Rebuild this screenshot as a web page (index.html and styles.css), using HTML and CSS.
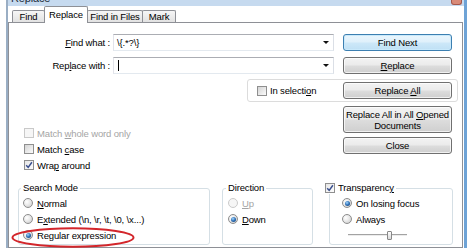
FILE: index.html
```html
<!DOCTYPE html>
<html>
<head>
<meta charset="utf-8">
<title>Replace</title>
<link rel="stylesheet" href="styles.css">
</head>
<body>
<div class="window">
  <div class="titlebar"><span class="title">Replace</span><span class="close"></span></div>
  <div class="tabs">
    <div class="tab t-find">Find</div>
    <div class="tab t-replace active">Replace</div>
    <div class="tab t-files">Find in Files</div>
    <div class="tab t-mark">Mark</div>
  </div>
  <div class="panel">
    <div class="row row-find">
      <div class="lbl"><u>F</u>ind what :</div>
      <div class="combo"><span class="val">\{.*?\}</span><span class="arrow"></span></div>
      <div class="btn default"><span>Find Next</span></div>
    </div>
    <div class="row row-repl">
      <div class="lbl">Rep<u>l</u>ace with :</div>
      <div class="combo"><span class="caret"></span><span class="arrow"></span></div>
      <div class="btn"><span><u>R</u>eplace</span></div>
    </div>
    <div class="sel-box">
      <span class="cb"></span><span>In selecti<u>o</u>n</span>
      <div class="btn"><span>Replace <u>A</u>ll</span></div>
    </div>
    <div class="mid">
      <div class="checks">
        <div class="check-row"><span class="cb disabled"></span><span class="dim">Match <u>w</u>hole word only</span></div>
        <div class="check-row"><span class="cb"></span><span>Match <u>c</u>ase</span></div>
        <div class="check-row"><span class="cb checked"><svg viewBox="0 0 8 8" width="8" height="8"><path d="M1.2 4.2 L3.2 6.4 L6.9 1.3" fill="none" stroke="#3a4f8e" stroke-width="1.5"/></svg></span><span>Wra<u>p</u> around</span></div>
      </div>
      <div class="btns">
        <div class="btn tall"><span>Replace All in All <u>O</u>pened<br>Documents</span></div>
        <div class="btn"><span>Close</span></div>
      </div>
    </div>
    <div class="groups">
      <fieldset class="grp grp-search">
        <legend>Search Mode</legend>
        <div class="rows">
          <div class="check-row"><span class="rd"></span><span><u>N</u>ormal</span></div>
          <div class="check-row"><span class="rd"></span><span>E<u>x</u>tended (\n, \r, \t, \0, \x...)</span></div>
          <div class="check-row"><span class="rd on"></span><span>Regular expression</span></div>
        </div>
      </fieldset>
      <fieldset class="grp grp-dir">
        <legend>Direction</legend>
        <div class="rows">
          <div class="check-row"><span class="rd disabled"></span><span class="dim"><u>U</u>p</span></div>
          <div class="check-row"><span class="rd on"></span><span><u>D</u>own</span></div>
        </div>
      </fieldset>
      <fieldset class="grp grp-trans">
        <legend><span class="cb checked"><svg viewBox="0 0 8 8" width="8" height="8"><path d="M1.2 4.2 L3.2 6.4 L6.9 1.3" fill="none" stroke="#3a4f8e" stroke-width="1.5"/></svg></span><span>Transparenc<u>y</u></span></legend>
        <div class="rows">
          <div class="check-row"><span class="rd on"></span><span>On losing focus</span></div>
          <div class="check-row"><span class="rd"></span><span>Always</span></div>
          <div class="slider"><span class="track tl"></span><span class="thumb"></span><span class="track tr"></span></div>
        </div>
      </fieldset>
    </div>
  </div>
</div>
<svg class="mark" width="126" height="22" viewBox="0 0 126 22"><ellipse cx="62" cy="10.5" rx="60.5" ry="9.3" fill="none" stroke="#d3262b" stroke-width="2"/></svg>
</body>
</html>
```
FILE: styles.css
```css
* { box-sizing: border-box; }
html, body { margin: 0; padding: 0; }
body {
  width: 474px;
  height: 248px;
  overflow: hidden;
  background: #fff;
  font-family: "Liberation Sans", Arial, sans-serif;
  font-size: 9.5px;
  letter-spacing: -0.15px;
  color: #000;
  position: relative;
}
u { text-decoration: underline; text-underline-offset: 1px; }

.window {
  margin-left: 6px;
  width: 461px;
  height: 248px;
  border-left: 2px solid #9aaec4;
  border-right: 3px solid #6ea3d6;
  background: #fff;
  display: flex;
  flex-direction: column;
}
.titlebar {
  height: 6px;
  flex: none;
  background: #c6daef;
  display: flex;
  overflow: hidden;
}
.title {
  font-size: 11px;
  line-height: 11px;
  margin-top: -7px;
  margin-left: 3px;
  color: #1c2a3a;
}
.close {
  width: 11px;
  height: 5px;
  margin-left: auto;
  margin-right: 2px;
  background: #d98a78;
  border: 1px solid #a4574b;
  border-top: none;
  border-radius: 0 0 3px 3px;
}

.tabs {
  height: 16px;
  flex: none;
  display: flex;
  align-items: flex-end;
  padding-left: 4px;
}
.tab {
  height: 12px;
  border: 1px solid #8e9096;
  border-bottom: none;
  background: linear-gradient(#f6f6f6, #e2e2e2);
  display: flex;
  align-items: center;
  justify-content: center;
  margin-left: -1px;
  border-radius: 2px 2px 0 0;
}
.t-find { width: 33px; margin-left: 0; }
.t-replace { width: 44px; }
.t-files { width: 56px; }
.t-mark { width: 34px; }
.tab.active {
  height: 17px;
  margin-bottom: -1px;
  background: #fff;
  position: relative;
  z-index: 1;
  padding-bottom: 2px;
}

.panel {
  width: 455px;
  flex: 1;
  border: 1px solid #8e9096;
  background: #fff;
}

.row { display: flex; align-items: center; height: 17px; }
.row-find { margin-top: 11px; }
.row-repl { margin-top: 6px; }
.lbl { width: 101px; text-align: right; margin-right: 3px; }
.combo {
  width: 221px;
  height: 17px;
  border: 1px solid;
  border-color: #abadb3 #dbdfe6 #e3e9ef #e2e3ea;
  display: flex;
  align-items: center;
  padding-left: 3px;
  margin-right: 9px;
  background: #fff;
}
.caret { width: 1px; height: 11px; background: #000; margin-left: 1px; }
.arrow {
  margin-left: auto;
  margin-right: 4px;
  width: 0;
  height: 0;
  border-left: 3px solid transparent;
  border-right: 3px solid transparent;
  border-top: 3px solid #111;
}

.btn {
  width: 109px;
  height: 17px;
  border: 1px solid #707070;
  border-radius: 3px;
  background: linear-gradient(#f3f3f3 0%, #ebebeb 48%, #dddddd 52%, #cfcfcf 100%);
  box-shadow: inset 0 0 0 1px rgba(255,255,255,0.7);
  display: flex;
  align-items: center;
  justify-content: center;
  text-align: center;
  flex: none;
}
.btn > span { display: block; text-align: center; }
.btn.default {
  border-color: #3c7fb1;
  background: linear-gradient(#eaf6fd 0%, #dff0fb 48%, #cde8f8 52%, #bfe0f5 100%);
  box-shadow: inset 0 0 0 1px #c9e9fb;
}
.btn.tall { height: 27px; line-height: 11px; }

.sel-box {
  margin-top: 5px;
  margin-left: 238px;
  width: 211px;
  height: 23px;
  border: 1px solid #dcdcdc;
  border-radius: 3px;
  display: flex;
  align-items: center;
  padding: 0 5px 0 9px;
}
.sel-box .btn { margin-left: auto; }

.mid { display: flex; height: 71px; }
.checks { width: 334px; padding: 23px 0 0 15px; }
.check-row { display: flex; align-items: center; height: 16px; white-space: nowrap; }
.btns { padding-top: 4px; display: flex; flex-direction: column; gap: 4px; }

.cb {
  width: 10px;
  height: 10px;
  border: 1px solid #8f8f8f;
  background: linear-gradient(135deg, #d4d4d4, #fbfbfb);
  margin-right: 3px;
  flex: none;
  display: inline-flex;
  align-items: center;
  justify-content: center;
}
.cb.checked { background: linear-gradient(135deg, #e6e6e6, #fdfdfd); }
.cb.disabled { border-color: #c9c9c9; background: #f6f6f6; }
.dim { color: #a5a5a5; }

.rd {
  width: 10px;
  height: 10px;
  border-radius: 50%;
  border: 1px solid #8d8d8d;
  background: radial-gradient(circle at 35% 35%, #ffffff 0%, #e9e9e9 45%, #c6c6c6 100%);
  margin-right: 4px;
  flex: none;
  display: flex;
  align-items: center;
  justify-content: center;
}
.rd.on::after {
  content: "";
  width: 5px;
  height: 5px;
  border-radius: 50%;
  background: radial-gradient(circle at 40% 35%, #a4d8ff 0%, #2d6fb6 50%, #153d72 100%);
}
.rd.disabled { border-color: #cbcbcb; background: #f6f6f6; }

.groups { display: flex; margin-top: 9px; }
.grp {
  margin: 0;
  padding: 1px 0 1px 0;
  border: 1px solid #d5dfe5;
  border-radius: 3px;
  min-inline-size: 0;
}
.grp legend {
  padding: 0 2px;
  line-height: 12px;
  font-size: 9.5px;
}
.grp-search { margin-left: 9px; width: 192px; }
.grp-search legend { margin-left: 2px; }
.grp-search .rows { padding-left: 4px; }
.grp-dir { margin-left: 12px; width: 91px; }
.grp-dir legend { margin-left: 3px; }
.grp-dir .rows { padding-left: 5px; }
.grp-trans { margin-left: 16px; width: 124px; }
.grp-trans legend { margin-left: -5px; padding: 0 2px 0 0; display: flex; align-items: center; }
.grp-trans legend .cb { margin-right: 3px; }
.grp-trans .rows { padding-left: 12px; }

.slider { display: flex; align-items: center; height: 16px; margin-left: 6px; }
.track {
  height: 2px;
  border-top: 1px solid #a3a3a3;
  border-bottom: 1px solid #ececec;
}
.tl { width: 39px; }
.tr { width: 15px; }
.thumb {
  width: 5px;
  height: 9px;
  border: 1px solid #878787;
  border-radius: 1px;
  background: linear-gradient(#fdfdfd, #d9d9d9);
}

.mark {
  position: absolute;
  left: 11px;
  top: 227px;
}
```
